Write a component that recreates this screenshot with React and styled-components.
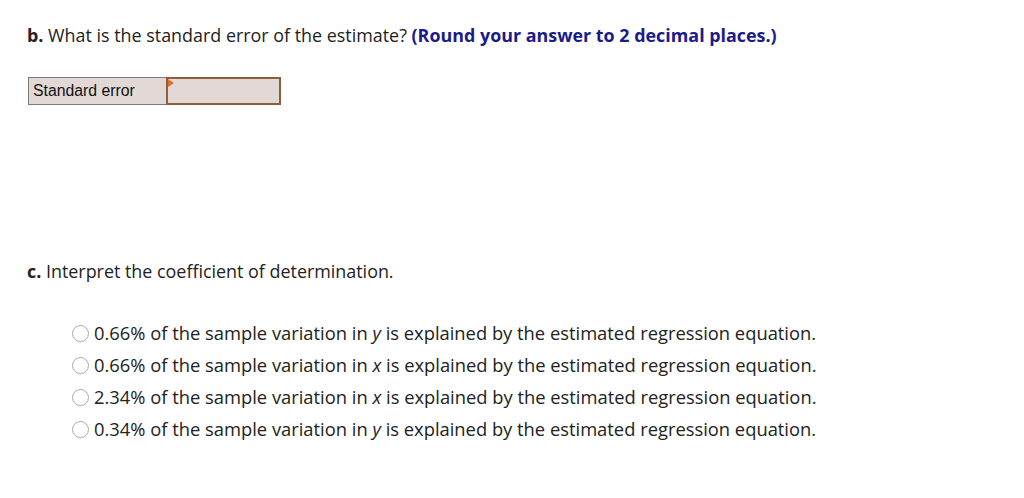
import styled, { createGlobalStyle } from "styled-components";

const GlobalStyle = createGlobalStyle`
  body {
    margin: 0;
    background: #fff;
    font-family: "Open Sans", "Liberation Sans", sans-serif;
    color: #222;
  }
`;

const options = [
  { pct: "0.66%", v: "y" },
  { pct: "0.66%", v: "x" },
  { pct: "2.34%", v: "x" },
  { pct: "0.34%", v: "y" },
];

export default function App() {
  return (
    <>
      <GlobalStyle />
      <Page>
        <Question>
          <b>b.</b> What is the standard error of the estimate?{" "}
          <Hint>(Round your answer to 2 decimal places.)</Hint>
        </Question>

        <AnswerTable>
          <LabelCell>Standard error</LabelCell>
          <InputCell>
            <Marker />
          </InputCell>
        </AnswerTable>

        <Question $gap="155px">
          <b>c.</b> Interpret the coefficient of determination.
        </Question>

        <Options>
          {options.map((o, i) => (
            <Option key={i}>
              <Radio />
              <span>
                {o.pct} of the sample variation in <Var>{o.v}</Var> is explained by the
                estimated regression equation.
              </span>
            </Option>
          ))}
        </Options>
      </Page>
    </>
  );
}

const Page = styled.div`
  padding: 24px 0 0 27px;
  display: flex;
  flex-direction: column;
  align-items: flex-start;
`;

const Question = styled.p`
  margin: ${(p) => p.$gap || "0"} 0 0 0;
  font-size: 17.9px;
  line-height: 22px;
  color: #222;
  b {
    font-weight: 700;
  }
`;

const Hint = styled.span`
  font-weight: 700;
  color: #1b1b8a;
`;

const AnswerTable = styled.div`
  margin: 31px 0 0 1px;
  display: flex;
  height: 28px;
`;

const LabelCell = styled.div`
  width: 133px;
  padding-left: 4px;
  background: #e2d9d6;
  border: 1px solid #7a7a7a;
  border-right: none;
  font-family: "Liberation Sans", Arial, sans-serif;
  font-size: 15.8px;
  display: flex;
  align-items: center;
  color: #111;
`;

const InputCell = styled.div`
  position: relative;
  width: 115px;
  background: #e2d9d6;
  border: 2px solid #8b5e3c;
  box-sizing: border-box;
`;

const Marker = styled.div`
  position: absolute;
  top: 0;
  left: 0;
  width: 0;
  height: 0;
  border-top: 4px solid transparent;
  border-bottom: 4px solid transparent;
  border-left: 6px solid #e0712b;
`;

const Options = styled.div`
  margin: 40px 0 0 45px;
  display: flex;
  flex-direction: column;
  gap: 10px;
`;

const Option = styled.label`
  display: flex;
  align-items: center;
  gap: 5px;
  font-size: 18.35px;
  line-height: 22px;
  color: #222;
`;

const Radio = styled.span`
  flex-shrink: 0;
  width: 17px;
  height: 17px;
  border-radius: 50%;
  border: 1px solid #aaa;
  background: #fff;
  box-sizing: border-box;
`;

const Var = styled.i`
  font-style: italic;
`;
